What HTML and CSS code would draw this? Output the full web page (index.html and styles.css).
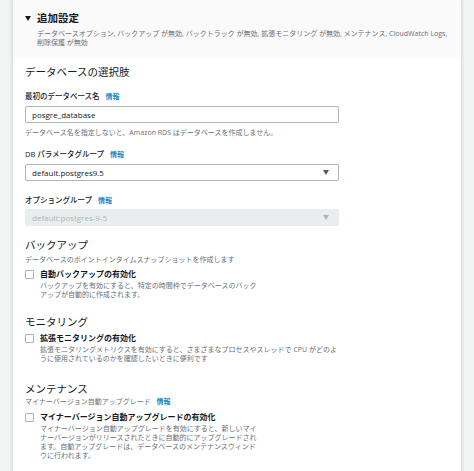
FILE: index.html
```html
<!DOCTYPE html>
<html lang="ja">
<head>
<meta charset="utf-8">
<link rel="stylesheet" href="styles.css">
</head>
<body>
<div class="card">
  <div class="card-head">
    <div class="title-row"><span class="caret"></span><span class="title">追加設定</span></div>
    <div class="head-desc">データベースオプション, バックアップ が無効, バックトラック が無効, 拡張モニタリング が無効, メンテナンス, CloudWatch Logs,<br>削除保護 が無効</div>
  </div>
  <div class="card-body">
    <h2 class="h-first">データベースの選択肢</h2>

    <div class="label l-first">最初のデータベース名 <a class="info">情報</a></div>
    <div class="input">posgre_database</div>
    <div class="hint">データベース名を指定しないと、Amazon RDS はデータベースを作成しません。</div>

    <div class="label l-second">DB パラメータグループ <a class="info">情報</a></div>
    <div class="select"><span>default.postgres9.5</span><span class="arrow"></span></div>

    <div class="label l-third">オプショングループ <a class="info">情報</a></div>
    <div class="select disabled"><span>default:postgres-9-5</span><span class="arrow"></span></div>

    <h2 class="h-backup">バックアップ</h2>
    <div class="sub">データベースのポイントインタイムスナップショットを作成します</div>
    <div class="check c-backup">
      <span class="box"></span>
      <div class="check-text">
        <div class="check-label">自動バックアップの有効化</div>
        <div class="check-desc">バックアップを有効にすると、特定の時間枠でデータベースのバック<br>アップが自動的に作成されます。</div>
      </div>
    </div>

    <h2 class="h-monitor">モニタリング</h2>
    <div class="check c-monitor">
      <span class="box"></span>
      <div class="check-text">
        <div class="check-label">拡張モニタリングの有効化</div>
        <div class="check-desc">拡張モニタリングメトリクスを有効にすると、さまざまなプロセスやスレッドで CPU がどのよ<br>うに使用されているのかを確認したいときに便利です</div>
      </div>
    </div>

    <h2 class="h-maint">メンテナンス</h2>
    <div class="sub sub-maint">マイナーバージョン自動アップグレード <a class="info">情報</a></div>
    <div class="check c-maint">
      <span class="box"></span>
      <div class="check-text">
        <div class="check-label">マイナーバージョン自動アップグレードの有効化</div>
        <div class="check-desc">マイナーバージョン自動アップグレードを有効にすると、新しいマイ<br>ナーバージョンがリリースされたときに自動的にアップグレードされ<br>ます。自動アップグレードは、データベースのメンテナンスウィンド<br>ウに行われます。</div>
      </div>
    </div>
  </div>
</div>
</body>
</html>
```

FILE: styles.css
```css
html, body {
  margin: 0;
  padding: 0;
}
body {
  background: #f2f3f3;
  font-family: "Open Sans", "Noto Sans CJK JP", sans-serif;
  color: #16191f;
  height: 471px;
  overflow: hidden;
}
.card {
  margin-left: 12px;
  width: 448px;
  min-height: 480px;
  background: #ffffff;
  border-left: 1px solid #e1e3e3;
  border-right: 1px solid #e1e3e3;
  box-shadow: 0 0 3px rgba(0, 0, 0, 0.14);
}
.card-head {
  background: #fafafa;
  height: 57px;
  box-sizing: border-box;
  padding: 11px 12px 0 12px;
}
.title-row {
  display: flex;
  align-items: center;
  height: 14px;
}
.caret {
  width: 0;
  height: 0;
  border-left: 3px solid transparent;
  border-right: 3px solid transparent;
  border-top: 5px solid #16191f;
  margin-right: 6px;
}
.title {
  font-size: 10.5px;
  font-weight: 700;
  line-height: 14px;
}
.head-desc {
  margin: 3.5px 0 0 12px;
  font-size: 7px;
  line-height: 9px;
  color: #687078;
  white-space: nowrap;
}
.card-body {
  padding: 8px 12px 0 12px;
}
h2 {
  margin: 0;
  font-size: 10.5px;
  font-weight: 400;
  line-height: 14px;
  color: #16191f;
}
.label {
  font-size: 7.5px;
  font-weight: 500;
  line-height: 10px;
  color: #16191f;
}
.info {
  color: #1589c9;
  font-size: 7px;
  font-weight: 700;
  margin-left: 4px;
}
.l-first { margin-top: 12px; }
.l-second { margin-top: 12.5px; }
.l-third { margin-top: 14px; }
.input, .select {
  box-sizing: border-box;
  width: 314px;
  height: 17px;
  border: 1px solid #aab7b8;
  border-radius: 2px;
  padding: 0 9px 0 6px;
  font-size: 8px;
  font-weight: 500;
  line-height: 15px;
  margin-top: 4px;
  background: #ffffff;
}
.select {
  display: flex;
  justify-content: space-between;
  align-items: center;
}
.arrow {
  width: 0;
  height: 0;
  border-left: 3px solid transparent;
  border-right: 3px solid transparent;
  border-top: 5px solid #545b64;
}
.select.disabled {
  margin-top: 3px;
  background: #eaeded;
  border-color: #eaeded;
  color: #aab7b8;
  font-weight: 400;
}
.select.disabled .arrow {
  border-top-color: #aab7b8;
}
.hint {
  margin-top: 4.5px;
  font-size: 7px;
  line-height: 9px;
  color: #687078;
}
.h-backup { margin-top: 12px; }
.h-monitor { margin-top: 16px; }
.h-maint { margin-top: 19.5px; }
.sub {
  margin-top: 2.5px;
  font-size: 7px;
  line-height: 9px;
  color: #687078;
}
.sub-maint { margin-top: 0.5px; }
.check {
  display: flex;
  align-items: flex-start;
}
.c-backup { margin-top: 5.5px; }
.c-monitor { margin-top: 4.5px; }
.c-maint { margin-top: 6.5px; }
.box {
  box-sizing: border-box;
  width: 9px;
  height: 9px;
  border: 1px solid #aab7b8;
  border-radius: 1px;
  margin-top: 1px;
  margin-right: 6px;
  flex: none;
  background: #fff;
}
.check-label {
  font-size: 8px;
  font-weight: 700;
  line-height: 10px;
  color: #16191f;
}
.check-desc {
  margin-top: 1.5px;
  font-size: 7px;
  line-height: 9px;
  color: #687078;
  white-space: nowrap;
}
```
